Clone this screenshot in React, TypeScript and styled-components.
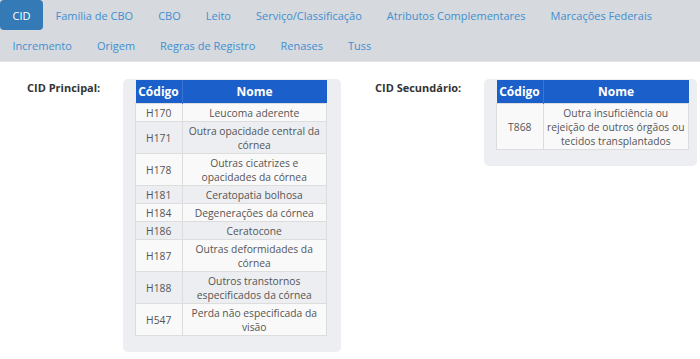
import styled, { createGlobalStyle } from 'styled-components'

type CidRow = { code: string; name: string }

const tabsRowOne = [
  'CID',
  'Família de CBO',
  'CBO',
  'Leito',
  'Serviço/Classificação',
  'Atributos Complementares',
  'Marcações Federais'
]
const tabsRowTwo = ['Incremento', 'Origem', 'Regras de Registro', 'Renases', 'Tuss']

const principal: CidRow[] = [
  { code: 'H170', name: 'Leucoma aderente' },
  { code: 'H171', name: 'Outra opacidade central da córnea' },
  { code: 'H178', name: 'Outras cicatrizes e opacidades da córnea' },
  { code: 'H181', name: 'Ceratopatia bolhosa' },
  { code: 'H184', name: 'Degenerações da córnea' },
  { code: 'H186', name: 'Ceratocone' },
  { code: 'H187', name: 'Outras deformidades da córnea' },
  { code: 'H188', name: 'Outros transtornos especificados da córnea' },
  { code: 'H547', name: 'Perda não especificada da visão' }
]

const secundario: CidRow[] = [
  { code: 'T868', name: 'Outra insuficiência ou rejeição de outros órgãos ou tecidos transplantados' }
]

const GlobalStyle = createGlobalStyle`
  html, body {
    margin: 0;
    padding: 0;
    background: #ffffff;
    font-family: "Open Sans", "Noto Sans", sans-serif;
  }
`

const CidTable = ({ rows }: { rows: CidRow[] }): React.JSX.Element => (
  <Table>
    <thead>
      <tr>
        <HeadCell $width={46}>Código</HeadCell>
        <HeadCell>Nome</HeadCell>
      </tr>
    </thead>
    <tbody>
      {rows.map((row) => (
        <Row key={row.code}>
          <Cell>{row.code}</Cell>
          <Cell>{row.name}</Cell>
        </Row>
      ))}
    </tbody>
  </Table>
)

export default function App(): React.JSX.Element {
  return (
    <>
      <GlobalStyle />
      <Nav>
        <TabRow>
          {tabsRowOne.map((tab) => (
            <Tab key={tab} $active={tab === 'CID'}>
              {tab}
            </Tab>
          ))}
        </TabRow>
        <TabRow>
          {tabsRowTwo.map((tab) => (
            <Tab key={tab}>{tab}</Tab>
          ))}
        </TabRow>
      </Nav>
      <Content>
        <Column $indent={27}>
          <Label $width={96}>CID Principal:</Label>
          <Panel $width={218} $padRight={14}>
            <CidTable rows={principal} />
          </Panel>
        </Column>
        <Column $indent={25}>
          <Label $width={109}>CID Secundário:</Label>
          <Panel $width={213} $padRight={8}>
            <CidTable rows={secundario} />
          </Panel>
        </Column>
      </Content>
    </>
  )
}

const Nav = styled.nav`
  background: #d6d9dd;
  border-bottom: 1px solid #e4e6e9;
  padding: 0 0 1px;
`

const TabRow = styled.div`
  display: flex;
  height: 30px;
`

const Tab = styled.a<{ $active?: boolean }>`
  display: flex;
  align-items: center;
  flex-shrink: 0;
  white-space: nowrap;
  padding: 0 12.5px;
  border-radius: 4px;
  font-size: 11px;
  color: ${({ $active }) => ($active ? '#ffffff' : '#3f8fd2')};
  background: ${({ $active }) => ($active ? '#337ab7' : 'transparent')};
  cursor: pointer;
`

const Content = styled.main`
  display: flex;
  align-items: flex-start;
  padding-top: 17px;
`

const Column = styled.section<{ $indent: number }>`
  display: flex;
  align-items: flex-start;
  width: 350px;
  padding-left: ${({ $indent }) => $indent}px;
  box-sizing: border-box;
`

const Label = styled.div<{ $width: number }>`
  width: ${({ $width }) => $width}px;
  flex-shrink: 0;
  font-size: 11px;
  font-weight: 700;
  color: #333333;
  line-height: 15px;
  margin-top: 1px;
`

const Panel = styled.div<{ $width: number; $padRight: number }>`
  width: ${({ $width }) => $width}px;
  flex-shrink: 0;
  box-sizing: border-box;
  background: #eceef1;
  border-radius: 5px;
  padding: 1px ${({ $padRight }) => $padRight}px 16px 12px;
`

const Table = styled.table`
  width: 100%;
  border-collapse: collapse;
  font-size: 10.3px;
  color: #555555;
  text-align: center;
`

const HeadCell = styled.th<{ $width?: number }>`
  width: ${({ $width }) => ($width ? `${$width}px` : 'auto')};
  height: 23px;
  padding: 0;
  background: #1b5fca;
  color: #ffffff;
  font-size: 12px;
  font-weight: 700;
  border-left: 1px solid #3b75d0;
  &:first-child {
    border-left: none;
  }
`

const Row = styled.tr`
  background: #f9f9f9;
  &:nth-child(even) {
    background: #eceef1;
  }
`

const Cell = styled.td`
  border: 1px solid #dddddd;
  padding: 1.5px 3px;
  line-height: 14px;
`
